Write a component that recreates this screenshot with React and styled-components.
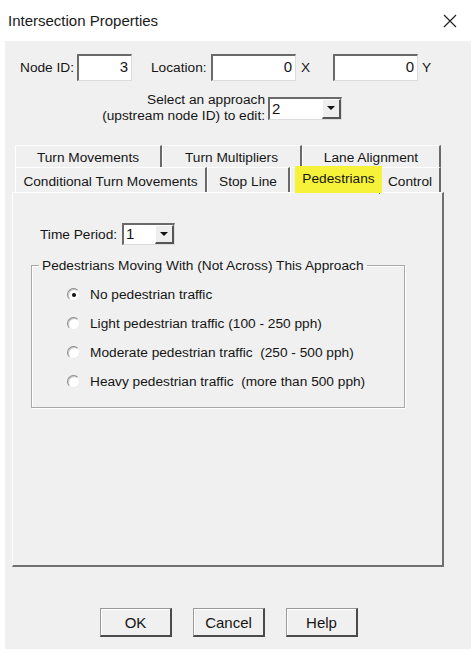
import styled, { createGlobalStyle } from "styled-components"

const Global = createGlobalStyle`
    body {
        margin: 0;
        background: #ffffff;
        font-family: "Liberation Sans", Arial, sans-serif;
        color: #151515;
    }
`

const Window = styled.div`
    width: 474px;
    height: 654px;
    background: #ffffff;
    display: flex;
    flex-direction: column;
`

const TitleBar = styled.div`
    height: 41px;
    display: flex;
    align-items: center;
    justify-content: space-between;
    padding: 0 17px 0 8px;
    font-size: 15px;
    color: #1a1a1a;
`

const Dialog = styled.div`
    margin-left: 5px;
    width: 466px;
    height: 608px;
    background: #f0f0f0;
    display: flex;
    flex-direction: column;
    font-size: 13.7px;
`

const Row = styled.div`
    display: flex;
    align-items: center;
    margin-top: ${props => props.top || 0}px;
    padding-left: ${props => props.left || 0}px;
`

const Label = styled.span`
    margin-left: ${props => props.gap || 0}px;
    width: ${props => props.w ? `${props.w}px` : "auto"};
    white-space: nowrap;
`

const Field = styled.div`
    box-sizing: border-box;
    width: ${props => props.w}px;
    height: 27px;
    background: #ffffff;
    border-top: 2px solid #6a6a6a;
    border-left: 2px solid #6a6a6a;
    border-right: 1px solid #dcdcdc;
    border-bottom: 1px solid #dcdcdc;
    text-align: right;
    padding: 1px 3px 0 0;
    font-size: 15px;
    line-height: 20px;
`

const ApproachLabel = styled.div`
    width: 200px;
    margin-left: 60px;
    text-align: right;
    line-height: 16px;
`

const Select = styled.div`
    box-sizing: border-box;
    width: ${props => props.w}px;
    height: ${props => props.h}px;
    margin-left: ${props => props.gap || 0}px;
    background: #ffffff;
    border-top: 2px solid #6a6a6a;
    border-left: 2px solid #6a6a6a;
    border-right: 1px solid #dcdcdc;
    border-bottom: 1px solid #dcdcdc;
    display: flex;
    align-items: stretch;
    font-size: 15px;
`

const SelectValue = styled.span`
    flex: 1;
    padding-left: 2px;
    line-height: ${props => props.h - 4}px;
`

const DropButton = styled.div`
    box-sizing: border-box;
    width: 19px;
    background: #eeeeee;
    border-top: 1px solid #ffffff;
    border-left: 1px solid #ffffff;
    border-right: 2px solid #555555;
    border-bottom: 2px solid #555555;
    display: flex;
    align-items: center;
    justify-content: center;
`

const Arrow = styled.div`
    width: 0;
    height: 0;
    border-left: 4px solid transparent;
    border-right: 4px solid transparent;
    border-top: 4px solid #111111;
`

const TabControl = styled.div`
    margin: 21px 0 0 7px;
    width: 432px;
`

const TabStrip = styled.div`
    padding-left: 3px;
    display: flex;
    flex-direction: column;
`

const TabRow = styled.div`
    display: flex;
    height: ${props => props.h}px;
    align-items: flex-end;
`

const Tab = styled.div`
    box-sizing: border-box;
    width: ${props => props.w}px;
    height: 100%;
    border-top: 1px solid #ffffff;
    border-left: 1px solid #ffffff;
    border-right: 2px solid #6a6a6a;
    display: flex;
    align-items: center;
    justify-content: center;
    padding-top: 2px;
    white-space: nowrap;
`

const ActiveTab = styled(Tab)`
    height: calc(100% + 2px);
    margin-bottom: -2px;
    border-right-width: 1px;
    padding: 0 0 4px 7px;
    position: relative;
    z-index: 1;
`

const Highlight = styled.span`
    background: #f6f23a;
    padding: 5px 7px 7px 7px;
`

const Panel = styled.div`
    box-sizing: border-box;
    height: 375px;
    border-top: 1px solid #ffffff;
    border-left: 1px solid #ffffff;
    border-right: 2px solid #707070;
    border-bottom: 2px solid #707070;
    padding: 30px 0 0 27px;
    display: flex;
    flex-direction: column;
`

const GroupBox = styled.fieldset`
    box-sizing: border-box;
    margin: 13px 0 0 -9px;
    width: 374px;
    height: 150px;
    border: 1px solid #a8a8a8;
    box-shadow: 1px 1px 0 #ffffff, inset 1px 1px 0 #ffffff;
    padding: 12px 0 0 0;
`

const Legend = styled.legend`
    margin-left: 7px;
    padding: 0 3px;
    white-space: nowrap;
`

const RadioList = styled.div`
    display: flex;
    flex-direction: column;
    gap: 10px;
    padding-left: 35px;
`

const RadioRow = styled.label`
    display: flex;
    align-items: center;
    height: 19px;
    white-space: pre;
`

const RadioCircle = styled.span`
    box-sizing: border-box;
    width: 13px;
    height: 13px;
    border-radius: 50%;
    background: #ffffff;
    border: 1px solid;
    border-color: #8a8a8a #ececec #ececec #8a8a8a;
    box-shadow: inset 1px 1px 0 #c8c8c8;
    margin-right: 10px;
    display: flex;
    align-items: center;
    justify-content: center;
    &::after {
        content: "";
        width: 4px;
        height: 4px;
        border-radius: 50%;
        background: ${props => props.checked ? "#111111" : "transparent"};
    }
`

const ButtonBar = styled.div`
    display: flex;
    gap: 21px;
    margin: 41px 0 0 95px;
`

const Button = styled.div`
    box-sizing: border-box;
    width: 72px;
    height: 29px;
    background: #f0f0f0;
    border-top: 1px solid #9a9a9a;
    border-left: 1px solid #9a9a9a;
    border-right: 2px solid #4a4a4a;
    border-bottom: 2px solid #4a4a4a;
    box-shadow: inset 1px 1px 0 #ffffff;
    display: flex;
    align-items: center;
    justify-content: center;
    font-size: 15px;
`

const CloseIcon = () => (
    <svg width="14" height="14" viewBox="0 0 14 14">
        <path d="M1 1 L13 13 M13 1 L1 13" stroke="#222" strokeWidth="1.2" fill="none" />
    </svg>
)

const DropDown = ({ value, w, h, gap }) => (
    <Select w={w} h={h} gap={gap}>
        <SelectValue h={h}>{value}</SelectValue>
        <DropButton><Arrow /></DropButton>
    </Select>
)

const radios = [
    { text: "No pedestrian traffic", checked: true },
    { text: "Light pedestrian traffic (100 - 250 pph)" },
    { text: "Moderate pedestrian traffic  (250 - 500 pph)" },
    { text: "Heavy pedestrian traffic  (more than 500 pph)" },
]

const App = () => {
    return (
        <Window>
            <Global />
            <TitleBar>
                <span>Intersection Properties</span>
                <CloseIcon />
            </TitleBar>
            <Dialog>
                <Row top={13} left={15}>
                    <Label w={57}>Node ID:</Label>
                    <Field w={55}>3</Field>
                    <Label gap={19} w={60}>Location:</Label>
                    <Field w={85}>0</Field>
                    <Label gap={5} w={32}>X</Label>
                    <Field w={85}>0</Field>
                    <Label gap={4}>Y</Label>
                </Row>
                <Row top={11}>
                    <ApproachLabel>Select an approach<br />(upstream node ID) to edit:</ApproachLabel>
                    <DropDown value="2" w={74} h={23} gap={3} />
                </Row>
                <TabControl>
                    <TabStrip>
                        <TabRow h={22}>
                            <Tab w={147}>Turn Movements</Tab>
                            <Tab w={140}>Turn Multipliers</Tab>
                            <Tab w={139}>Lane Alignment</Tab>
                        </TabRow>
                        <TabRow h={25}>
                            <Tab w={192}>Conditional Turn Movements</Tab>
                            <Tab w={83}>Stop Line</Tab>
                            <ActiveTab w={90}><Highlight>Pedestrians</Highlight></ActiveTab>
                            <Tab w={61}>Control</Tab>
                        </TabRow>
                    </TabStrip>
                    <Panel>
                        <Row>
                            <Label>Time Period:</Label>
                            <DropDown value="1" w={53} h={22} gap={5} />
                        </Row>
                        <GroupBox>
                            <Legend>Pedestrians Moving With (Not Across) This Approach</Legend>
                            <RadioList>
                                {radios.map(r => (
                                    <RadioRow key={r.text}>
                                        <RadioCircle checked={r.checked} />
                                        {r.text}
                                    </RadioRow>
                                ))}
                            </RadioList>
                        </GroupBox>
                    </Panel>
                </TabControl>
                <ButtonBar>
                    <Button>OK</Button>
                    <Button>Cancel</Button>
                    <Button>Help</Button>
                </ButtonBar>
            </Dialog>
        </Window>
    )
}

export default App
